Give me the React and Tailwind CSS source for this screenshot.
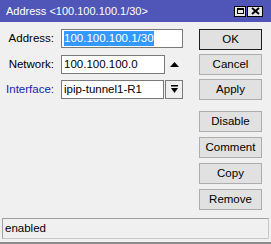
import React from "react";

const font = { fontFamily: '"Liberation Sans", Arial, sans-serif' };

function Btn({ children, def }) {
  return (
    <div
      className={`h-[21px] w-[63px] flex items-center justify-center bg-[#e1e1e1] text-[11.5px] text-black ${
        def ? "border border-[#1e1e1e]" : "border border-[#adadad]"
      }`}
    >
      {children}
    </div>
  );
}

export default function App() {
  return (
    <div
      className="w-[271px] h-[244px] bg-[#f0f0f0] flex flex-col overflow-hidden"
      style={font}
    >
      <div className="h-[22px] bg-[#4f56b8] flex items-center pl-[6px] pr-[8px]">
        <span className="text-white text-[11px] flex-1 leading-none">
          Address &lt;100.100.100.1/30&gt;
        </span>
        <div className="flex gap-[1px] items-center">
          <div className="w-[12px] h-[11px] bg-[#e8e8e8] border border-black flex items-center justify-center">
            <div className="w-[7px] h-[6px] border border-black border-t-2" />
          </div>
          <div className="w-[16px] h-[11px] bg-[#e8e8e8] border border-black flex items-center justify-center">
            <svg width="9" height="8" viewBox="0 0 9 8">
              <path d="M1 1 L8 7 M8 1 L1 7" stroke="black" strokeWidth="2" />
            </svg>
          </div>
        </div>
      </div>
      <div className="flex flex-1">
        <div className="w-[199px] pt-[7px] flex flex-col">
          <div className="flex items-center h-[19px]">
            <span className="w-[55px] text-right pr-[1px] text-[11.5px] text-black">Address:</span>
            <div className="ml-[6px] w-[122px] h-[19px] bg-white border border-[#7a7a7a] flex items-center pl-[2px]">
              <span className="bg-[#3399ff] text-white text-[11.5px] leading-[15px]">100.100.100.1/30</span>
            </div>
          </div>
          <div className="flex items-center h-[19px] mt-[7px]">
            <span className="w-[55px] text-right pr-[1px] text-[11.5px] text-black">Network:</span>
            <div className="ml-[6px] w-[104px] h-[19px] bg-white border border-[#7a7a7a] flex items-center pl-[2px] text-[11.5px] text-black">
              100.100.100.0
            </div>
            <svg className="ml-[5px]" width="9" height="5" viewBox="0 0 9 5">
              <path d="M0 5 L4.5 0 L9 5 Z" fill="black" />
            </svg>
          </div>
          <div className="flex items-center h-[19px] mt-[6px]">
            <span className="w-[55px] text-right pr-[1px] text-[11.5px] text-[#1b1bb0]">Interface:</span>
            <div className="ml-[6px] w-[103px] h-[19px] bg-white border border-[#7a7a7a] flex items-center pl-[2px] text-[11.5px] text-black">
              ipip-tunnel1-R1
            </div>
            <div className="ml-[1px] w-[18px] h-[19px] bg-[#f0f0f0] border border-[#7a7a7a] flex items-center justify-center">
              <svg width="7" height="9" viewBox="0 0 7 9">
                <rect x="0" y="0" width="7" height="1.5" fill="black" />
                <path d="M0 3 L7 3 L3.5 8 Z" fill="black" />
              </svg>
            </div>
          </div>
        </div>
        <div className="flex flex-col pt-[7px]">
          <div className="flex flex-col gap-[4px]">
            <Btn def>OK</Btn>
            <Btn>Cancel</Btn>
            <Btn>Apply</Btn>
          </div>
          <div className="flex flex-col gap-[5px] mt-[11px]">
            <Btn>Disable</Btn>
            <Btn>Comment</Btn>
            <Btn>Copy</Btn>
            <Btn>Remove</Btn>
          </div>
        </div>
      </div>
      <div className="mx-[2px] mb-[3px] h-[21px] border border-[#c8c8c8] border-t-[#a0a0a0] border-l-[#a0a0a0] flex items-center pl-[2px] text-[11.5px] text-black">
        enabled
      </div>
      <div className="h-[2px] bg-[#8a8a8a]" />
    </div>
  );
}
